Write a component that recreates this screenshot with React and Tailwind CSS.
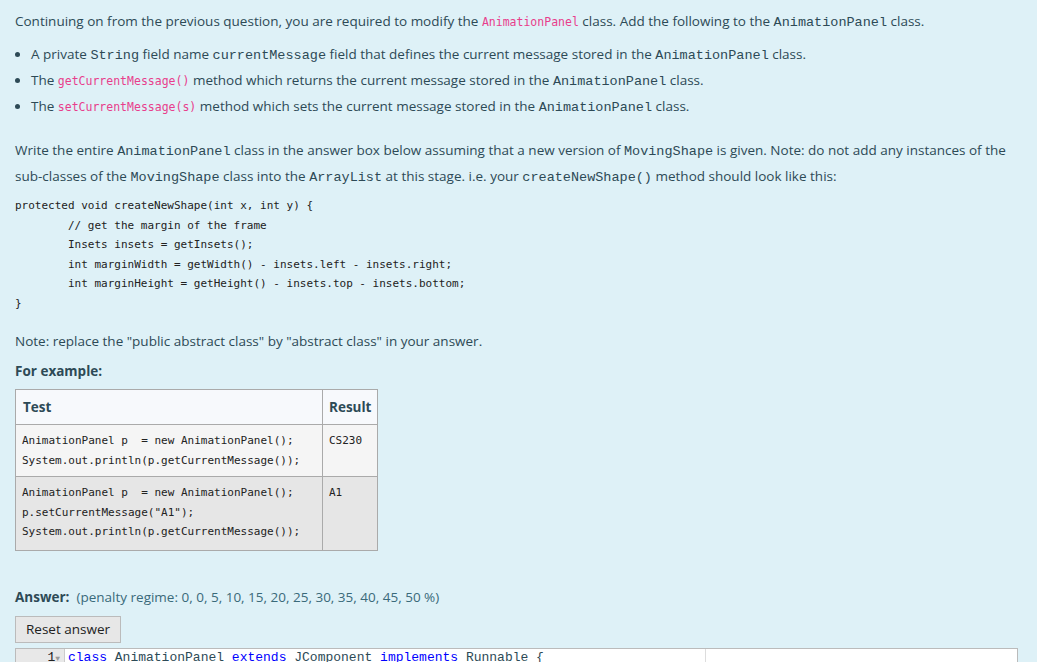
import React from "react";

const cons = "font-[family-name:DejaVu_Sans_Mono]";

function Pink({ children }) {
    return <code className="font-[family-name:DejaVu_Sans_Mono] text-[11.5px] text-[#e83e8c]">{children}</code>;
}
function Cour({ children }) {
    return <span className="font-[family-name:Liberation_Mono] text-[13.5px]">{children}</span>;
}

export default function App() {
    return (
        <div className="bg-[#def1f7] h-[662px] w-[1037px] overflow-hidden text-[#2d4a56] font-[family-name:Open_Sans] text-[13.5px] px-[15px] pt-[10px]">
            <p className="leading-[22px] mb-[8px]">
                Continuing on from the previous question, you are required to modify the <Pink>AnimationPanel</Pink> class. Add the following to the <Cour>AnimationPanel</Cour> class.
            </p>
            <ul className="list-disc pl-[16px] leading-[25px]">
                <li>A private <Cour>String</Cour> field name <Cour>currentMessage</Cour> field that defines the current message stored in the <Cour>AnimationPanel</Cour> class.</li>
                <li>The <Pink>getCurrentMessage()</Pink> method which returns the current message stored in the <Cour>AnimationPanel</Cour> class.</li>
                <li>The <Pink>setCurrentMessage(s)</Pink> method which sets the current message stored in the <Cour>AnimationPanel</Cour> class.</li>
            </ul>
            <p className="leading-[24px] mt-[18px]">
                Write the entire <Cour>AnimationPanel</Cour> class in the answer box below assuming that a new version of <Cour>MovingShape</Cour> is given. Note: do not add any instances of the sub-classes of the <Cour>MovingShape</Cour> class into the <Cour>ArrayList</Cour> at this stage. i.e. your <Cour>createNewShape()</Cour> method should look like this:
            </p>
            <pre className={`${cons} text-[11px] leading-[19.5px] text-[#222] mt-[6px]`}>{`protected void createNewShape(int x, int y) {
        // get the margin of the frame
        Insets insets = getInsets();
        int marginWidth = getWidth() - insets.left - insets.right;
        int marginHeight = getHeight() - insets.top - insets.bottom;
}`}</pre>
            <p className="mt-[17px] leading-[22px]">Note: replace the "public abstract class" by "abstract class" in your answer.</p>
            <p className="mt-[8px] font-bold leading-[22px]">For example:</p>
            <table className="mt-[7px] border-collapse border border-[#aaa] text-[#222]">
                <thead>
                    <tr className="bg-[#f7f9fc] h-[35px]">
                        <th className="border border-[#aaa] text-left px-[7px] w-[307px] font-bold text-[#2d4a56]">Test</th>
                        <th className="border border-[#aaa] text-left px-[6px] font-bold text-[#2d4a56]">Result</th>
                    </tr>
                </thead>
                <tbody className="font-[family-name:DejaVu_Sans_Mono] text-[11px] leading-[19.5px]">
                    <tr className="bg-[#f5f5f5] align-top">
                        <td className="border border-[#aaa] px-[6px] py-[6px] whitespace-pre">{"AnimationPanel p  = new AnimationPanel();\nSystem.out.println(p.getCurrentMessage());"}</td>
                        <td className="border border-[#aaa] px-[6px] pt-[6px]">CS230</td>
                    </tr>
                    <tr className="bg-[#e6e6e6] align-top">
                        <td className="border border-[#aaa] px-[6px] pt-[6px] pb-[8px] whitespace-pre">{'AnimationPanel p  = new AnimationPanel();\np.setCurrentMessage("A1");\nSystem.out.println(p.getCurrentMessage());'}</td>
                        <td className="border border-[#aaa] px-[6px] pt-[6px]">A1</td>
                    </tr>
                </tbody>
            </table>
            <p className="mt-[35px] leading-[22px]">
                <b>Answer:</b>&nbsp; <span className="text-[#3a6a7a]">(penalty regime: 0, 0, 5, 10, 15, 20, 25, 30, 35, 40, 45, 50 %)</span>
            </p>
            <button className="mt-[8px] h-[27px] px-[10px] bg-[#e7e7e7] border border-[#bbb] text-[#222]">Reset answer</button>
            <div className="mt-[5px] w-[1003px] h-[30px] border border-[#bbb] bg-[#f5f5f5] flex text-[13px] leading-[18px] font-[family-name:Liberation_Mono]">
                <div className="w-[49px] bg-[#e8e8e8] border-r border-[#ccc] text-right pr-[4px] text-[#222]">1<span className="text-[8px] text-[#999]">▼</span></div>
                <div className="flex-1 bg-white pl-[3px] flex">
                    <span className="w-[637px]"><span className="text-[#0000ff]">class</span> AnimationPanel <span className="text-[#0000ff]">extends</span> JComponent <span className="text-[#0000ff]">implements</span> Runnable {"{"}</span>
                    <span className="border-l border-[#ddd]"></span>
                </div>
            </div>
        </div>
    );
}
